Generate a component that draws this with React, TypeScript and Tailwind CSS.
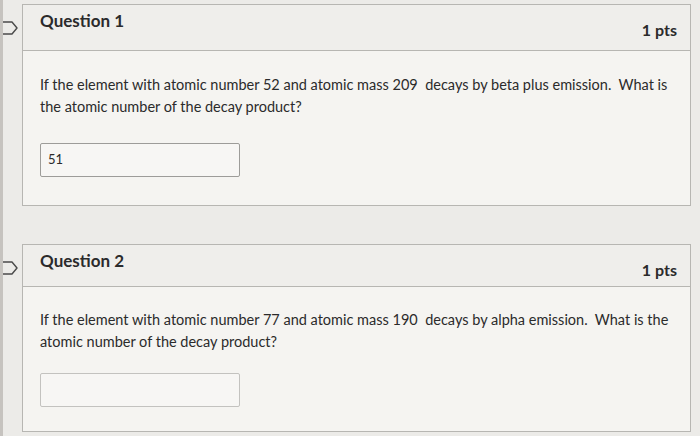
const questions = [
  {
    id: 1,
    points: "1 pts",
    text: "If the element with atomic number 52 and atomic mass 209\u00a0 decays by beta plus emission.\u00a0 What is the atomic number of the decay product?",
    answer: "51",
    strongInput: true,
    headerPb: "pb-[11px]",
    bodyPt: "pt-[23px]",
    inputMt: "mt-[25px]",
    bodyPb: "pb-[28px]",
  },
  {
    id: 2,
    points: "1 pts",
    text: "If the element with atomic number 77 and atomic mass 190\u00a0 decays by alpha emission.\u00a0 What is the atomic number of the decay product?",
    answer: "",
    strongInput: false,
    headerPb: "pb-[7px]",
    bodyPt: "pt-[22px]",
    inputMt: "mt-[20px]",
    bodyPb: "pb-[24px]",
  },
];

function Flag() {
  return (
    <svg width="16" height="16" viewBox="0 0 16 16" className="shrink-0">
      <path
        d="M-2 2 H9 L14 8 L9 14 H-2"
        fill="none"
        stroke="#4a4a4a"
        strokeWidth="1.4"
        strokeLinejoin="round"
      />
    </svg>
  );
}

export default function App() {
  return (
    <div
      className="w-[700px] h-[436px] overflow-hidden bg-[#ecebe8] border-l-[3px] border-[#c6c3bf] flex flex-col gap-[38px] pt-[4px] text-[#2b2b2b]"
      style={{ fontFamily: "Lato, 'Liberation Sans', sans-serif" }}
    >
      {questions.map((q) => (
        <div key={q.id} className="flex">
          <div className="w-[19px] shrink-0 pt-[16px]">
            <Flag />
          </div>
          <div className="w-[669px] border border-[#b7b6b2] bg-[#f5f4f1]">
            <div
              className={`flex justify-between items-start bg-[#efeeeb] border-b border-[#b7b6b2] pl-[17px] pr-[13px] pt-[6px] ${q.headerPb}`}
            >
              <h2 className="text-[17px] leading-[1.2] font-bold">Question {q.id}</h2>
              <div className="mt-[9px] text-[16px] leading-[1.2] font-bold">{q.points}</div>
            </div>
            <div className={`pl-[17px] pr-[8px] ${q.bodyPt} ${q.bodyPb}`}>
              <p className="text-[14.5px] leading-[22px]">{q.text}</p>
              <div
                className={`${q.inputMt} w-[200px] h-[34px] rounded-[2px] border bg-[#f7f6f4] px-[7px] flex items-center text-[13px] ${
                  q.strongInput ? "border-[#9d9c99]" : "border-[#c3c2bf]"
                }`}
              >
                {q.answer}
              </div>
            </div>
          </div>
        </div>
      ))}
    </div>
  );
}
